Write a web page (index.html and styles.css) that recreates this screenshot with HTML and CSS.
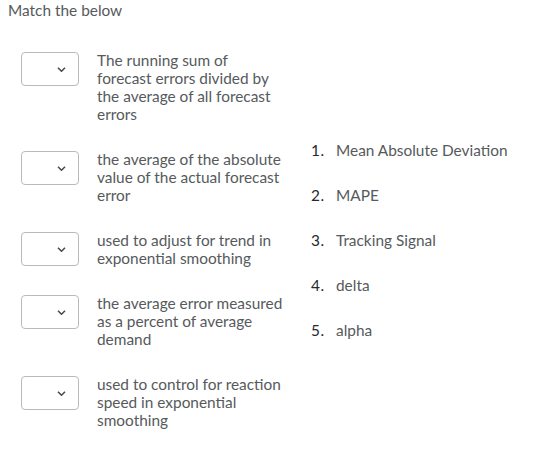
FILE: index.html
```html
<!DOCTYPE html>
<html>
<head>
<meta charset="utf-8">
<link rel="stylesheet" href="styles.css">
</head>
<body>
<div class="page">
  <div class="title">Match the below</div>
  <div class="match">
    <div class="prompts">
      <div class="row">
        <div class="select"><svg class="chev" width="9" height="5" viewBox="0 0 9 5"><path d="M1 0.8 L4.5 4.2 L8 0.8" fill="none" stroke="#494c4e" stroke-width="1.6"/></svg></div>
        <div class="desc">The running sum of forecast errors divided by the average of all forecast errors</div>
      </div>
      <div class="row">
        <div class="select"><svg class="chev" width="9" height="5" viewBox="0 0 9 5"><path d="M1 0.8 L4.5 4.2 L8 0.8" fill="none" stroke="#494c4e" stroke-width="1.6"/></svg></div>
        <div class="desc">the average of the absolute value of the actual forecast error</div>
      </div>
      <div class="row">
        <div class="select"><svg class="chev" width="9" height="5" viewBox="0 0 9 5"><path d="M1 0.8 L4.5 4.2 L8 0.8" fill="none" stroke="#494c4e" stroke-width="1.6"/></svg></div>
        <div class="desc">used to adjust for trend in exponential smoothing</div>
      </div>
      <div class="row">
        <div class="select"><svg class="chev" width="9" height="5" viewBox="0 0 9 5"><path d="M1 0.8 L4.5 4.2 L8 0.8" fill="none" stroke="#494c4e" stroke-width="1.6"/></svg></div>
        <div class="desc">the average error measured as a percent of average demand</div>
      </div>
      <div class="row">
        <div class="select"><svg class="chev" width="9" height="5" viewBox="0 0 9 5"><path d="M1 0.8 L4.5 4.2 L8 0.8" fill="none" stroke="#494c4e" stroke-width="1.6"/></svg></div>
        <div class="desc">used to control for reaction speed in exponential smoothing</div>
      </div>
    </div>
    <div class="choices">
      <div class="choice"><span class="num">1.</span><span class="ctext">Mean Absolute Deviation</span></div>
      <div class="choice"><span class="num">2.</span><span class="ctext">MAPE</span></div>
      <div class="choice"><span class="num">3.</span><span class="ctext">Tracking Signal</span></div>
      <div class="choice"><span class="num">4.</span><span class="ctext">delta</span></div>
      <div class="choice"><span class="num">5.</span><span class="ctext">alpha</span></div>
    </div>
  </div>
</div>
</body>
</html>
```

FILE: styles.css
```css
html, body {
  margin: 0;
  padding: 0;
  background: #ffffff;
}
.page {
  font-family: Lato, "Open Sans", sans-serif;
  font-size: 15.4px;
  line-height: 18px;
  color: #565a5c;
  padding: 1px 8px 0 8px;
}
.match {
  display: flex;
  align-items: center;
  margin-top: 32px;
}
.prompts {
  display: flex;
  flex-direction: column;
  gap: 27px;
  padding-left: 13px;
}
.row {
  display: flex;
  align-items: flex-start;
}
.select {
  box-sizing: border-box;
  width: 58px;
  height: 34px;
  margin-top: 1px;
  border: 1px solid #b8babc;
  border-radius: 4px;
  background: #fff;
  display: flex;
  align-items: center;
  justify-content: flex-end;
  padding-right: 12px;
  flex: none;
}
.chev {
  display: block;
}
.desc {
  margin-left: 18px;
  width: 188px;
}
.choices {
  display: flex;
  flex-direction: column;
  margin-left: 26px;
}
.choice {
  display: flex;
  height: 45px;
  align-items: center;
}
.num {
  width: 25px;
  color: #26282a;
  letter-spacing: 0.5px;
}
```
